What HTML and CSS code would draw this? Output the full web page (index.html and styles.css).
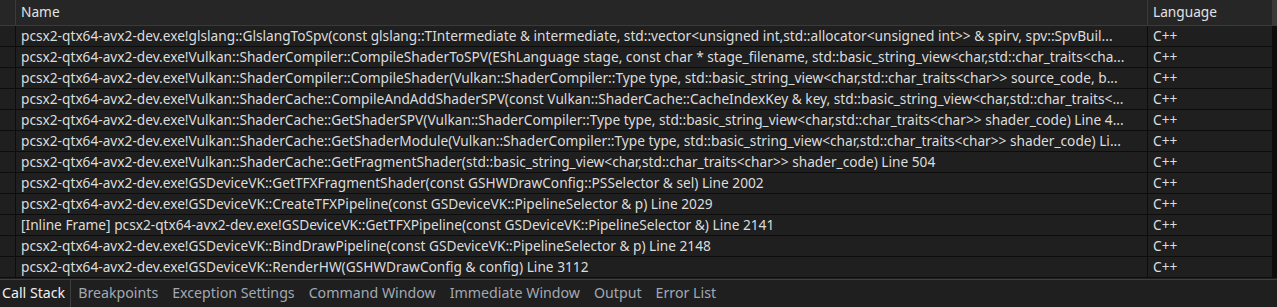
FILE: index.html
```html
<!DOCTYPE html>
<html>
<head>
<meta charset="utf-8">
<link rel="stylesheet" href="styles.css">
</head>
<body>
<div class="panel">
  <div class="grid">
    <div class="row head">
      <div class="c0"></div>
      <div class="c1">Name</div>
      <div class="c2">Language</div>
      <div class="c3"></div>
    </div>
    <div class="row"><div class="c0"></div><div class="c1">pcsx2-qtx64-avx2-dev.exe!glslang::GlslangToSpv(const glslang::TIntermediate &amp; intermediate, std::vector&lt;unsigned int,std::allocator&lt;unsigned int&gt;&gt; &amp; spirv, spv::SpvBuil...</div><div class="c2">C++</div><div class="c3"></div></div>
    <div class="row"><div class="c0"></div><div class="c1">pcsx2-qtx64-avx2-dev.exe!Vulkan::ShaderCompiler::CompileShaderToSPV(EShLanguage stage, const char * stage_filename, std::basic_string_view&lt;char,std::char_traits&lt;cha...</div><div class="c2">C++</div><div class="c3"></div></div>
    <div class="row"><div class="c0"></div><div class="c1">pcsx2-qtx64-avx2-dev.exe!Vulkan::ShaderCompiler::CompileShader(Vulkan::ShaderCompiler::Type type, std::basic_string_view&lt;char,std::char_traits&lt;char&gt;&gt; source_code, b...</div><div class="c2">C++</div><div class="c3"></div></div>
    <div class="row"><div class="c0"></div><div class="c1">pcsx2-qtx64-avx2-dev.exe!Vulkan::ShaderCache::CompileAndAddShaderSPV(const Vulkan::ShaderCache::CacheIndexKey &amp; key, std::basic_string_view&lt;char,std::char_traits&lt;...</div><div class="c2">C++</div><div class="c3"></div></div>
    <div class="row"><div class="c0"></div><div class="c1">pcsx2-qtx64-avx2-dev.exe!Vulkan::ShaderCache::GetShaderSPV(Vulkan::ShaderCompiler::Type type, std::basic_string_view&lt;char,std::char_traits&lt;char&gt;&gt; shader_code) Line 4...</div><div class="c2">C++</div><div class="c3"></div></div>
    <div class="row"><div class="c0"></div><div class="c1">pcsx2-qtx64-avx2-dev.exe!Vulkan::ShaderCache::GetShaderModule(Vulkan::ShaderCompiler::Type type, std::basic_string_view&lt;char,std::char_traits&lt;char&gt;&gt; shader_code) Li...</div><div class="c2">C++</div><div class="c3"></div></div>
    <div class="row"><div class="c0"></div><div class="c1">pcsx2-qtx64-avx2-dev.exe!Vulkan::ShaderCache::GetFragmentShader(std::basic_string_view&lt;char,std::char_traits&lt;char&gt;&gt; shader_code) Line 504</div><div class="c2">C++</div><div class="c3"></div></div>
    <div class="row"><div class="c0"></div><div class="c1">pcsx2-qtx64-avx2-dev.exe!GSDeviceVK::GetTFXFragmentShader(const GSHWDrawConfig::PSSelector &amp; sel) Line 2002</div><div class="c2">C++</div><div class="c3"></div></div>
    <div class="row"><div class="c0"></div><div class="c1">pcsx2-qtx64-avx2-dev.exe!GSDeviceVK::CreateTFXPipeline(const GSDeviceVK::PipelineSelector &amp; p) Line 2029</div><div class="c2">C++</div><div class="c3"></div></div>
    <div class="row"><div class="c0"></div><div class="c1">[Inline Frame] pcsx2-qtx64-avx2-dev.exe!GSDeviceVK::GetTFXPipeline(const GSDeviceVK::PipelineSelector &amp;) Line 2141</div><div class="c2">C++</div><div class="c3"></div></div>
    <div class="row"><div class="c0"></div><div class="c1">pcsx2-qtx64-avx2-dev.exe!GSDeviceVK::BindDrawPipeline(const GSDeviceVK::PipelineSelector &amp; p) Line 2148</div><div class="c2">C++</div><div class="c3"></div></div>
    <div class="row"><div class="c0"></div><div class="c1">pcsx2-qtx64-avx2-dev.exe!GSDeviceVK::RenderHW(GSHWDrawConfig &amp; config) Line 3112</div><div class="c2">C++</div><div class="c3"></div></div>
  </div>
  <div class="tabs">
    <div class="tab active">Call Stack</div>
    <div class="tab">Breakpoints</div>
    <div class="tab">Exception Settings</div>
    <div class="tab">Command Window</div>
    <div class="tab">Immediate Window</div>
    <div class="tab">Output</div>
    <div class="tab">Error List</div>
  </div>
</div>
</body>
</html>
```
FILE: styles.css
```css
html, body {
  margin: 0;
  padding: 0;
  background: #1f1f1f;
}
.panel {
  width: 1277px;
  height: 307px;
  background: #1f1f1f;
  font-family: "Noto Sans", "Open Sans", sans-serif;
  font-size: 13.7px;
  color: #dcdcdc;
  display: flex;
  flex-direction: column;
  overflow: hidden;
}
.grid {
  display: flex;
  flex-direction: column;
  height: 279px;
}
.row {
  display: grid;
  grid-template-columns: 15px 1131px 124px 1px;
  column-gap: 1px;
  height: 20px;
  line-height: 20px;
  border-bottom: 1px solid #0d0d0d;
  background: #0d0d0d;
}
.row > div {
  background: #1f1f1f;
  white-space: nowrap;
  overflow: hidden;
  text-overflow: ellipsis;
}
.row .c3 { background: #0d0d0d; }
.row .c1, .row .c2 {
  padding-left: 5px;
}
.row .c1 { padding-right: 4px; }
.head {
  height: 25px;
  line-height: 24px;
  background: #3a3a3a;
  border-bottom: 1px solid #3a3a3a;
}
.head > div {
  background: #262626;
  color: #e2e2e2;
}
.head .c3 { background: #3a3a3a; }
.tabs {
  display: flex;
  height: 27px;
  border-top: 1px solid #3f3f3f;
  align-items: stretch;
  font-size: 14.2px;
}
.tab {
  padding: 0 7px;
  line-height: 26px;
  color: #a2a9b3;
  white-space: nowrap;
}
.tab.active {
  color: #f0f0f0;
  padding: 0 5px 0 2px;
  border-right: 1px solid #3f3f3f;
}
```
